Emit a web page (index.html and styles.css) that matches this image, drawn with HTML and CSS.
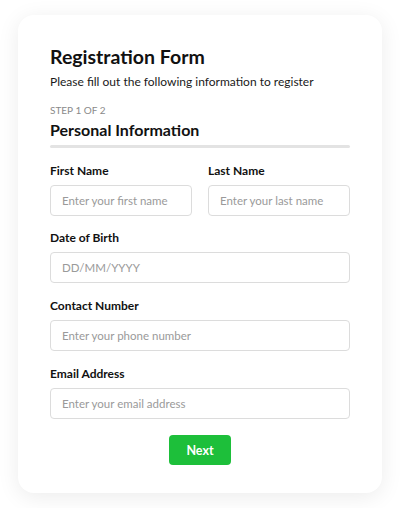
FILE: index.html
```html
<!DOCTYPE html>
<html lang="en">
<head>
<meta charset="utf-8">
<title>Registration Form</title>
<link rel="stylesheet" href="styles.css">
</head>
<body>
<div class="page">
  <form class="card">
    <h1 class="title">Registration Form</h1>
    <p class="subtitle">Please fill out the following information to register</p>
    <div class="step">STEP 1 OF 2</div>
    <h2 class="section">Personal Information</h2>
    <div class="divider"></div>
    <div class="row">
      <div class="field">
        <label class="label">First Name</label>
        <input class="input" type="text" placeholder="Enter your first name">
      </div>
      <div class="field">
        <label class="label">Last Name</label>
        <input class="input" type="text" placeholder="Enter your last name">
      </div>
    </div>
    <div class="field">
      <label class="label">Date of Birth</label>
      <input class="input" type="text" placeholder="DD/MM/YYYY">
    </div>
    <div class="field">
      <label class="label">Contact Number</label>
      <input class="input" type="text" placeholder="Enter your phone number">
    </div>
    <div class="field">
      <label class="label">Email Address</label>
      <input class="input" type="text" placeholder="Enter your email address">
    </div>
    <div class="actions">
      <button class="btn" type="button">Next</button>
    </div>
  </form>
</div>
</body>
</html>
```

FILE: styles.css
```css
* { box-sizing: border-box; }
html, body { margin: 0; padding: 0; background: #ffffff; }
body {
  font-family: Lato, "Open Sans", "Liberation Sans", sans-serif;
  color: #111111;
}
.page {
  padding: 15px 18px;
}
.card {
  width: 364px;
  background: #ffffff;
  border-radius: 16px;
  box-shadow: 0 4px 22px rgba(0, 0, 0, 0.08);
  padding: 30px 32px 28px;
  display: flex;
  flex-direction: column;
}
.title {
  margin: 0;
  font-size: 19.5px;
  line-height: 24px;
  font-weight: 700;
  color: #111;
}
.subtitle {
  margin: 5px 0 0;
  font-size: 12px;
  line-height: 16px;
  color: #1a1a1a;
}
.step {
  margin-top: 13px;
  font-size: 10px;
  line-height: 14px;
  color: #8a8a8a;
}
.section {
  margin: 3px 0 0;
  font-size: 16px;
  line-height: 20px;
  font-weight: 700;
  color: #111;
}
.divider {
  margin-top: 5px;
  height: 3px;
  border-radius: 2px;
  background: #e3e3e3;
}
.row {
  display: grid;
  grid-template-columns: 1fr 1fr;
  gap: 16px;
}
.field {
  display: flex;
  flex-direction: column;
  margin-top: 15px;
}
.row .field { margin-top: 15px; }
.row + .field { margin-top: 14px; }
.label {
  font-size: 12px;
  line-height: 16px;
  font-weight: 700;
  color: #111;
}
.input {
  margin-top: 6px;
  height: 31px;
  width: 100%;
  border: 1px solid #dcdcdc;
  border-radius: 4px;
  padding: 0 11px;
  font-family: inherit;
  font-size: 11.5px;
  color: #333;
  background: #fff;
  outline: none;
}
.input::placeholder { color: #9a9a9a; }
.actions {
  display: flex;
  justify-content: center;
  margin-top: 16px;
}
.btn {
  width: 62px;
  height: 30px;
  border: none;
  border-radius: 4px;
  background: #1dbf3a;
  color: #fff;
  font-family: inherit;
  font-size: 12.5px;
  font-weight: 700;
  cursor: pointer;
}
```
